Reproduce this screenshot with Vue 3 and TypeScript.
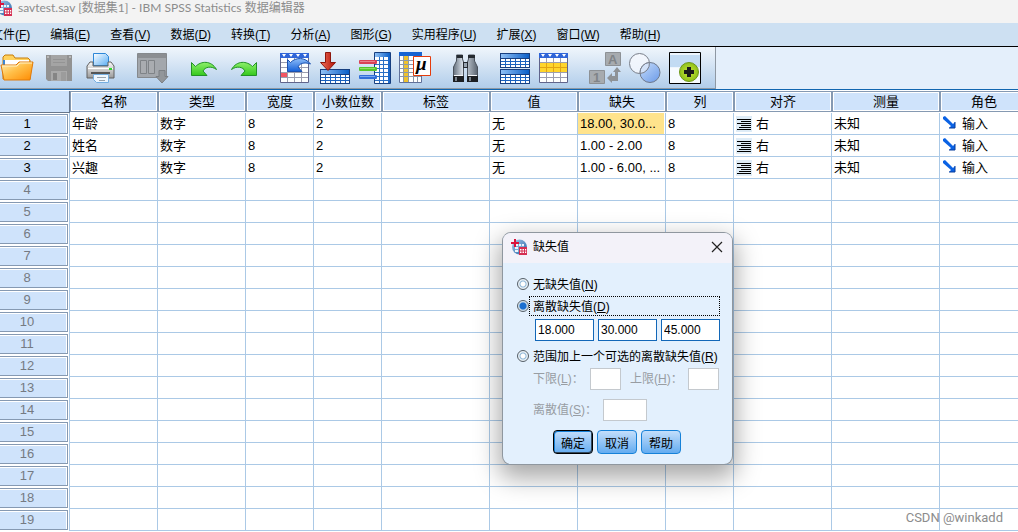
<script setup lang="ts">
import { ref } from 'vue'

interface Column { title: string; width: number }
interface Variable { name: string; missing: string }

const menus: [string, string][] = [
  ['文件', 'F'], ['编辑', 'E'], ['查看', 'V'], ['数据', 'D'], ['转换', 'T'], ['分析', 'A'],
  ['图形', 'G'], ['实用程序', 'U'], ['扩展', 'X'], ['窗口', 'W'], ['帮助', 'H'],
]

const columns: Column[] = [
  { title: '名称', width: 88 },
  { title: '类型', width: 88 },
  { title: '宽度', width: 68 },
  { title: '小数位数', width: 68 },
  { title: '标签', width: 108 },
  { title: '值', width: 88 },
  { title: '缺失', width: 88 },
  { title: '列', width: 68 },
  { title: '对齐', width: 98 },
  { title: '测量', width: 108 },
  { title: '角色', width: 88 },
]

const variables: Variable[] = [
  { name: '年龄', missing: '18.00, 30.0...' },
  { name: '姓名', missing: '1.00 - 2.00' },
  { name: '兴趣', missing: '1.00 - 6.00, ...' },
]

const emptyRows = Array.from({ length: 16 }, (_, i) => i + 4)
const mode = ref('discrete')
const discrete = ref(['18.000', '30.000', '45.000'])
</script>

<template>
  <div class="app">
    <svg class="defs" width="0" height="0" aria-hidden="true">
      <defs>
        <linearGradient id="gFolder" x1="0" y1="0" x2="1" y2="1">
          <stop offset="0" stop-color="#fff0b8" /><stop offset=".45" stop-color="#ffc04a" /><stop offset="1" stop-color="#ff8a00" />
        </linearGradient>
        <linearGradient id="gBlue" x1="0" y1="0" x2="1" y2="0">
          <stop offset="0" stop-color="#8fc0f5" /><stop offset="1" stop-color="#0a5fc8" />
        </linearGradient>
        <linearGradient id="gArrow" x1="0" y1="0" x2="0" y2="1">
          <stop offset="0" stop-color="#8dbcf8" /><stop offset="1" stop-color="#1560d8" />
        </linearGradient>
        <linearGradient id="gGreen" x1="0" y1="0" x2="0" y2="1">
          <stop offset="0" stop-color="#8df06a" /><stop offset="1" stop-color="#34c81c" />
        </linearGradient>
        <linearGradient id="gRed" x1="0" y1="0" x2="1" y2="0">
          <stop offset="0" stop-color="#f0705c" /><stop offset="1" stop-color="#b01005" />
        </linearGradient>
        <linearGradient id="gMetal" x1="0" y1="0" x2="1" y2="0">
          <stop offset="0" stop-color="#66717e" /><stop offset=".4" stop-color="#dce4ec" /><stop offset="1" stop-color="#5a6470" />
        </linearGradient>
        <linearGradient id="gPaper" x1="0" y1="0" x2="1" y2="1">
          <stop offset="0" stop-color="#fff" /><stop offset="1" stop-color="#5aaef5" />
        </linearGradient>
        <linearGradient id="gPrinter" x1="0" y1="0" x2="0" y2="1">
          <stop offset="0" stop-color="#fafafa" /><stop offset="1" stop-color="#9a9a9a" />
        </linearGradient>
        <linearGradient id="gCircle" x1="0" y1="0" x2="1" y2="1">
          <stop offset="0" stop-color="#c5dcfb" /><stop offset="1" stop-color="#5c90e8" />
        </linearGradient>
        <radialGradient id="gLime">
          <stop offset="0" stop-color="#c8e838" /><stop offset="1" stop-color="#8fc01a" />
        </radialGradient>
        <linearGradient id="gGlobe" x1="0" y1="0" x2="1" y2="1">
          <stop offset="0" stop-color="#a8cdea" /><stop offset="1" stop-color="#1f5fa6" />
        </linearGradient>
        <symbol id="logo" viewBox="0 0 16 16">
          <circle cx="8.5" cy="8" r="7.5" fill="url(#gGlobe)" />
          <path d="M4 5h9v8H4z" fill="#eef5fb" />
          <path d="M4 7.500h9M4 10.500h9M7.500 5v8M10.500 5v8" stroke="#7aaad4" />
          <path d="M3 0h2v3h3v2H5v3H3V5H0V3h3z" fill="#d9143c" />
          <path d="M8 8h8v8H8z" fill="#d52f52" />
          <path d="M9 10h1.500v1.500H9zM11.500 10H13v1.500h-1.500zM14 10h1.200v1.500H14zM9 12.500h1.500V14H9zM11.500 12.500H13V14h-1.500zM14 12.500h1.200V14H14z" fill="#fff" />
        </symbol>
        <symbol id="calendar" viewBox="0 0 30 31">
          <path d="M.5 .5h28v29H.5z" fill="#fff" stroke="#60648c" />
          <path d="M0 0h29v5H0z" fill="#2f65d8" />
          <path d="M2 1h4L4 4zM9 1h4l-2 3zM16 1h4l-2 3zM23 1h4l-2 3z" fill="#fff" />
          <path d="M1 9.500h27M1 14.500h27M1 19.500h27M1 24.500h27M7.500 5v24M14.500 5v24M21.500 5v24" stroke="#9c9eaf" />
        </symbol>
        <symbol id="sheet" viewBox="0 0 30 15">
          <path d="M0 0h30v15H0z" fill="#173f80" />
          <path d="M1 1h28v4H1z" fill="url(#gBlue)" />
          <path d="M1 6h28v8H1z" fill="#fff" />
          <path d="M1 8.500h28M1 11.500h28M5.500 6v8M10.500 6v8M15.500 6v8M20.500 6v8M25.500 6v8" stroke="#1b62be" />
        </symbol>
      </defs>
    </svg>

    <header class="titlebar">
      <svg class="logo" aria-hidden="true"><use href="#logo" /></svg>
      <span>savtest.sav [数据集1] - IBM SPSS Statistics 数据编辑器</span>
    </header>

    <nav class="menubar">
      <button v-for="[label, key] in menus" :key="key" type="button">{{ label }}(<u>{{ key }}</u>)</button>
    </nav>

    <div class="toolstrip">
      <div class="toolbar">
        <div class="group wide">
          <button type="button" aria-label="打开">
            <svg viewBox="0 0 32 32">
              <path d="M0 27V5l2-2h8l2 3h13l2 2v19z" fill="#ffd25e" stroke="#c77c09" />
              <path d="M1 8h25v5H1z" fill="#fff" /><path d="M1 8v15" stroke="#3a86d4" stroke-width="2" />
              <path d="M1 14h13l3-3h11v4H1z" fill="#ffd25e" stroke="#d98a16" />
              <path d="M-2 13h15l3-3h14l-3 18H1z" fill="url(#gFolder)" stroke="#e07a0a" />
              <path d="M-1 14h15l3-3h12" fill="none" stroke="#fff3c8" />
            </svg>
          </button>
          <button type="button" aria-label="保存">
            <svg viewBox="0 0 32 32">
              <path d="M3 3h26v26H5l-2-2z" fill="#929292" />
              <path d="M8 3h16v11H8z" fill="#a4a4a4" /><path d="M10 7.500h12M10 10.500h12" stroke="#949494" />
              <path d="M8 19h16v10H8z" fill="#a9a9a9" /><path d="M10 21h4v7h-4z" fill="#858585" />
              <path d="M18 20h5v9h-5z" fill="#9c9c9c" /><path d="M4 5h2M26 5h2" stroke="#b8b8b8" stroke-width="2" />
            </svg>
          </button>
          <button type="button" aria-label="打印">
            <svg viewBox="0 0 32 32">
              <path d="M10.500 1.500h12l3 3v9h-15z" fill="url(#gPaper)" stroke="#2d87d8" />
              <path d="M7 10h3v4h15v-4h3l3 4v12H4V14z" fill="url(#gPrinter)" stroke="#616161" />
              <path d="M5 16.500h25" stroke="#fff" /><path d="M8 20h19v2H8z" fill="#555" />
              <path d="M26 16h3v2h-3z" fill="#2fd52f" />
              <path d="M10.500 22.500h15v8h-12l-3-3z" fill="#eef7ff" stroke="#75aee0" />
              <path d="M14 25.500h9M16 28.500h6" stroke="#9aa3ac" />
            </svg>
          </button>
        </div>
        <div class="group wide">
          <button type="button" aria-label="调用对话框">
            <svg viewBox="0 0 32 32">
              <path d="M2.500 1.500h29v24h-29z" fill="#a3a7ac" stroke="#85898d" /><path d="M3 2h28v4H3z" fill="#8b8e92" />
              <path d="M5.500 8.500h6v13h-6zM13.500 8.500h6v13h-6z" fill="#a9acb0" stroke="#7f8387" />
              <path d="M24 18.500h6v6h3l-6 6.500-6-6.500h3z" fill="#92969a" stroke="#7b7f83" />
            </svg>
          </button>
        </div>
        <div class="group wide">
          <button type="button" aria-label="撤销">
            <svg viewBox="0 0 32 32"><path d="M4.500 10.500l4 4C14 9 24 8 29.500 17.500 24 13.500 18 15 16 19l4 4.500H4.500z" fill="url(#gGreen)" stroke="#239226" /></svg>
          </button>
          <button type="button" aria-label="重做">
            <svg viewBox="0 0 32 32"><path d="M29.500 10.500l-4 4C20 9 10 8 4.500 17.500 10 13.500 16 15 18 19l-4 4.500h15.500z" fill="url(#gGreen)" stroke="#239226" /></svg>
          </button>
        </div>
        <div class="group">
          <button type="button" aria-label="转到个案">
            <svg viewBox="0 0 32 32">
              <use href="#calendar" x="1" y="1" width="30" height="31" />
              <path d="M2 21h6v4H2z" fill="#f25562" />
              <path d="M8.500 7.500l3 3C17 5 26 5 31.500 12 25 9.500 20 12 19 15l4 4.500H8.500z" fill="url(#gArrow)" stroke="#1c51b0" />
            </svg>
          </button>
          <button type="button" aria-label="转到变量">
            <svg viewBox="0 0 32 32">
              <use href="#sheet" x="1" y="17" width="30" height="15" />
              <path d="M6.500 .5h5v10h5l-7.500 8-7.500-8h5z" fill="url(#gRed)" stroke="#8e170d" />
            </svg>
          </button>
          <button type="button" aria-label="变量">
            <svg viewBox="0 0 32 32">
              <path d="M15.500 .5h16v31h-16z" fill="#fff" stroke="#173f80" /><path d="M16 1h15v4H16z" fill="url(#gBlue)" /><path d="M29 5h2v26h-2z" fill="#1b67c9" />
              <path d="M16 8.500h13M16 12.500h13M16 16.500h13M16 20.500h13M16 24.500h13M16 28.500h13M20.500 5v26M24.500 5v26" stroke="#2a6fc4" />
              <rect y="8" width="18" height="4" rx="1" fill="#d94256" /><rect y="15" width="18" height="4" rx="1" fill="#55c72c" /><rect y="23" width="18" height="4" rx="1" fill="#316fd9" />
              <path d="M1 9.500h15" stroke="#e8808c" /><path d="M1 16.500h15" stroke="#8fe065" /><path d="M1 24.500h15" stroke="#7aa8f0" />
            </svg>
          </button>
          <button type="button" aria-label="描述统计">
            <svg viewBox="0 0 32 32">
              <path d="M.5 .5h22v30H.5z" fill="#fff" stroke="#60709a" /><path d="M0 0h23v4H0z" fill="#1764d2" /><path d="M5 4h4v26H5z" fill="#efc22e" />
              <path d="M1 8.500h21M1 12.500h21M1 16.500h21M1 20.500h21M1 24.500h21M4.500 4v26M9.500 4v26M14.500 4v26M18.500 4v26" stroke="#8c98aa" />
              <path d="M14.500 4.500h17v19h-17z" fill="#fff" stroke="#e53c0c" />
              <text x="17" y="18" class="mu">μ</text>
            </svg>
          </button>
        </div>
        <div class="group">
          <button type="button" aria-label="查找">
            <svg viewBox="0 0 32 32">
              <path d="M7.500 3h6v4l1 3v19h-10V15l3-6zM19.500 3h6v6l3 6v14h-10V10l1-3z" fill="url(#gMetal)" stroke="#4a525c" />
              <path d="M8 3h6v3H8zM19 3h7v3h-7zM14 10h5v6h-5z" fill="#252a30" /><path d="M15 11h3v4h-3z" fill="#98a4b0" />
              <path d="M4 24h11v6H4zM18 24h11v6H18z" fill="#1c1f23" /><path d="M5 23.500h9M19 23.500h9" stroke="#f4f7fa" />
              <path d="M7 25v4M21 25v4" stroke="#7a838c" stroke-width="2" />
            </svg>
          </button>
        </div>
        <div class="group">
          <button type="button" aria-label="拆分文件">
            <svg viewBox="0 0 32 32"><use href="#sheet" x="1" y="1" width="30" height="15" /><use href="#sheet" x="1" y="17" width="30" height="15" /></svg>
          </button>
          <button type="button" aria-label="选择个案">
            <svg viewBox="0 0 32 32">
              <use href="#calendar" x="0" y="1" width="30" height="31" />
              <path d="M1 11h27v9H1z" fill="#ffd52c" /><path d="M1 15.500h27M7.500 11v9M14.500 11v9M21.500 11v9" stroke="#e0a414" />
            </svg>
          </button>
        </div>
        <div class="group">
          <button type="button" aria-label="值标签">
            <svg viewBox="0 0 32 32">
              <path d="M16.500 .5h15v13h-15zM.5 18.500h15v13H.5z" fill="#a7abaf" stroke="#8d9195" />
              <text x="19" y="12" class="tag">A</text><text x="4" y="30" class="tag">1</text>
              <path d="M28 15l4 5h-3v9h-6v2l-5-5 5-5v3h3v-4h-2z" fill="#8e9296" />
            </svg>
          </button>
          <button type="button" aria-label="使用变量集">
            <svg viewBox="0 0 32 32">
              <circle cx="10.500" cy="11.500" r="10" fill="#f6f9fe" fill-opacity=".8" stroke="#7a7f8a" />
              <circle cx="21" cy="20.500" r="10" fill="url(#gCircle)" fill-opacity=".85" stroke="#6d788c" />
              <path d="M20.400 10.500a10 10 0 0 1-9.300 11A10 10 0 0 1 20.400 10.500z" fill="#d3e2f8" stroke="#7a7f8a" />
            </svg>
          </button>
          <button type="button" aria-label="定制工具栏">
            <svg viewBox="0 0 32 32">
              <path d="M.5 .5h31v31H.5z" fill="#edf5fd" stroke="#000" /><path d="M1 3h30v12H1z" fill="#c2dbf3" /><path d="M1 16h30v15H1z" fill="#f7fbff" />
              <circle cx="20" cy="20" r="9.500" fill="url(#gLime)" stroke="#6e971a" />
              <path d="M18 15h4v3h3v4h-3v3h-4v-3h-3v-4h3z" fill="#1b1b1b" />
            </svg>
          </button>
        </div>
      </div>
    </div>

    <main class="grid">
      <table>
        <colgroup>
          <col class="rowcol">
          <col v-for="c in columns" :key="c.title" :style="{ width: c.width + 'px' }">
        </colgroup>
        <thead>
          <tr>
            <td class="corner"></td>
            <th v-for="c in columns" :key="c.title" scope="col"><span>{{ c.title }}</span></th>
          </tr>
        </thead>
        <tbody>
          <tr v-for="(v, i) in variables" :key="v.name">
            <th scope="row"><span>{{ i + 1 }}</span></th>
            <td>{{ v.name }}</td>
            <td>数字</td>
            <td>8</td>
            <td>2</td>
            <td></td>
            <td>无</td>
            <td :class="{ selected: i === 0 }">{{ v.missing }}</td>
            <td>8</td>
            <td>
              <div class="with-icon">
                <svg viewBox="0 0 16 16" aria-hidden="true">
                  <path d="M0 0h16v16H0z" fill="#deecf7" />
                  <path d="M1 3.500h14M5 5.500h10M1 7.500h14M5 9.500h10M3 11.500h12M1 13.500h14" stroke="#000" />
                </svg>右
              </div>
            </td>
            <td>未知</td>
            <td>
              <div class="with-icon">
                <svg viewBox="0 0 16 16" aria-hidden="true">
                  <path d="M1 1l2-1 8 8 2-2v6H7l2-2-8-7z" fill="#0b62e4" /><path d="M13 6v6H7" fill="none" stroke="#083d9a" />
                </svg>输入
              </div>
            </td>
          </tr>
          <tr v-for="n in emptyRows" :key="n" class="blank">
            <th scope="row"><span>{{ n }}</span></th>
            <td v-for="c in columns" :key="c.title"></td>
          </tr>
        </tbody>
      </table>
    </main>

    <section class="dialog" role="dialog" aria-labelledby="dlg-title">
      <header>
        <svg class="logo" aria-hidden="true"><use href="#logo" /></svg>
        <h1 id="dlg-title">缺失值</h1>
        <button type="button" class="close" aria-label="关闭">
          <svg viewBox="0 0 12 12"><path d="M1 1l10 10M11 1L1 11" stroke="#222" stroke-width="1.200" /></svg>
        </button>
      </header>
      <form @submit.prevent>
        <label class="option"><input v-model="mode" type="radio" name="mode" value="none"><span>无缺失值(<u>N</u>)</span></label>
        <label class="option focused"><input v-model="mode" type="radio" name="mode" value="discrete"><span>离散缺失值(<u>D</u>)</span></label>
        <div class="values">
          <input v-for="(_, i) in discrete" :key="i" v-model="discrete[i]" type="text" :aria-label="'离散缺失值 ' + (i + 1)">
        </div>
        <label class="option"><input v-model="mode" type="radio" name="mode" value="range"><span>范围加上一个可选的离散缺失值(<u>R</u>)</span></label>
        <div class="limits">
          <label for="low">下限(<u>L</u>)：</label><input id="low" type="text" disabled>
          <label for="high">上限(<u>H</u>)：</label><input id="high" type="text" disabled>
        </div>
        <div class="limits single">
          <label for="single">离散值(<u>S</u>)：</label><input id="single" type="text" disabled>
        </div>
        <div class="actions">
          <button type="submit" class="default">确定</button>
          <button type="button">取消</button>
          <button type="button">帮助</button>
        </div>
      </form>
    </section>

    <div class="watermark">CSDN @winkadd</div>
  </div>
</template>

<style>
body { overflow: hidden; }
</style>

<style scoped>
* { box-sizing: border-box; }
.app {
  position: relative;
  display: flex;
  flex-direction: column;
  height: 100vh;
  overflow: hidden;
  background: #fff;
  color: #000;
  font: 12px/16px "Liberation Sans", "Noto Sans CJK SC", sans-serif;
}
.defs { position: absolute; }
button { padding: 0; border: 0; background: none; font: inherit; color: inherit; white-space: nowrap; }
u { text-underline-offset: 1px; }
.logo { width: 16px; height: 16px; flex: none; }

.titlebar {
  display: flex;
  align-items: center;
  gap: 6px;
  flex: none;
  height: 23px;
  padding-bottom: 7px;
  margin-left: -4px;
  background: #f3f3f3;
  color: #8c8c8c;
  font-family: Lato, "Noto Sans CJK SC", sans-serif;
  white-space: nowrap;
}
.menubar {
  display: flex;
  gap: 20px;
  flex: none;
  height: 24px;
  border-bottom: 1px solid #000;
  background: #cde0f2;
}
.menubar button:first-child { margin-left: -9px; }

.toolstrip {
  display: flex;
  flex: none;
  background: #e4effb;
  border-bottom: 1px solid #1166b0;
}
.toolbar {
  display: flex;
  gap: 18px;
  padding: 5px 14px 4px 3px;
  border-right: 1px solid #8e98a3;
  border-bottom: 1px solid #8e98a3;
  background: linear-gradient(#f0f6fc, #b1cdea);
}
.group { display: flex; gap: 8px; }
.group.wide { margin-right: 2px; }
.toolbar button { width: 32px; height: 32px; }
.toolbar svg { display: block; width: 32px; height: 32px; overflow: visible; }
.mu { font: italic bold 19px "Liberation Serif", serif; }
.tag { font: bold 13px "Liberation Sans", sans-serif; fill: #808488; }

.grid { flex: 1; min-height: 0; overflow: hidden; padding-top: 1px; }
table { width: 1028px; min-width: 100%; table-layout: fixed; border-collapse: separate; border-spacing: 0; }
.rowcol { width: 70px; }
tr { height: 22px; }
td, th { height: 22px; padding: 0; font-weight: 400; font-size: 13px; line-height: 20px; white-space: nowrap; overflow: hidden; }
tbody td {
  padding: 0 0 0 2px;
  border-right: 1px solid #abc9e6;
  border-bottom: 1px solid #abc9e6;
}
td.selected { background: #ffe38c; box-shadow: inset -1px 0 #fff; }
.corner { background: #cfe3fb; border-right: 1px solid #68788d; border-bottom: 1px solid #68788d; }
thead th span {
  display: block;
  height: 21px;
  border: 1px solid #8599b2;
  box-shadow: inset 0 0 0 1px #fff;
  background: #cfe3fb;
  line-height: 20px;
}
thead th { vertical-align: top; }
tbody th { border-right: 1px solid #abc9e6; vertical-align: top; padding-top: 1px; }
tbody th span {
  display: block;
  height: 20px;
  margin-right: 1px;
  padding-right: 13px;
  border: 1px solid #8599b2;
  border-left: 0;
  box-shadow: inset 0 1px #fff, inset -1px 0 #fff;
  background: #cfe3fb;
  line-height: 18px;
}
.blank th { color: #757a82; }
.with-icon { display: flex; align-items: center; gap: 4px; }
.with-icon svg { width: 16px; height: 16px; flex: none; }

.dialog {
  position: absolute;
  left: 503px;
  top: 233px;
  width: 229px;
  border-radius: 8px;
  background: #e3f0fd;
  box-shadow: 0 0 0 1px #8f979f, 0 10px 24px 4px rgba(0, 0, 0, .34);
}
.dialog header {
  display: flex;
  align-items: center;
  gap: 6px;
  height: 30px;
  padding: 0 9px 2px 8px;
  border-radius: 8px 8px 0 0;
  background: #f3f2f9;
}
.dialog h1 { flex: 1; margin: 0; font-size: 12px; font-weight: 400; }
.close svg { display: block; width: 12px; height: 12px; }
form { padding: 11px 12px 10px 14px; }
.option { display: flex; align-items: center; height: 20px; }
.option + .option { margin-top: 2px; }
.option span { flex: 1; padding-left: 3px; border: 1px solid transparent; line-height: 20px; height: 20px; white-space: nowrap; }
.option.focused span { border: 1px dotted #000; }
input[type="radio"] {
  appearance: none;
  flex: none;
  width: 12px;
  height: 12px;
  margin: 0;
  border: 1px solid #555f68;
  border-radius: 50%;
  background: radial-gradient(circle, #fff 0 2px, #8fb7d8 3px, #e8f0f6 4px);
}
input[type="radio"]:checked { background: radial-gradient(circle, #1b6fd0 0 3px, #b8d2e6 4px, #e8f0f6 5px); }
input[type="text"] {
  height: 22px;
  min-width: 0;
  margin: 0;
  padding: 0 0 0 2px;
  border: 1px solid #1267b8;
  border-radius: 0;
  background: #fff;
  font: 12px/16px "Liberation Sans", sans-serif;
  color: #000;
}
input[type="text"]:disabled { border-color: #c4c9ce; }
.values { display: flex; gap: 4px; padding: 3px 0 5px 18px; }
.values input { flex: 1; }
.limits { display: flex; align-items: center; height: 22px; padding-left: 16px; margin-top: 2px; color: #989da3; white-space: nowrap; }
.limits label { flex: none; width: 57px; overflow: hidden; }
.limits input { width: 31px; }
.limits input + label { width: 58px; margin-left: 9px; }
.limits.single { margin-top: 9px; }
.limits.single label { width: 70px; }
.limits.single input { width: 44px; }
.actions { display: flex; gap: 4px; padding: 9px 0 0 36px; }
.actions button {
  width: 40px;
  height: 24px;
  padding-top: 3px;
  border: 1px solid #1681d8;
  border-radius: 4px;
  background: linear-gradient(#c3defb, #64acf0);
}
.actions .default { border-color: #000; box-shadow: inset 1px 1px #1681d8, inset -1px -1px #33485c; }
.watermark { position: absolute; right: 15px; bottom: 6px; color: #8c8c8c; font: 13px/16px Roboto, sans-serif; }
</style>
